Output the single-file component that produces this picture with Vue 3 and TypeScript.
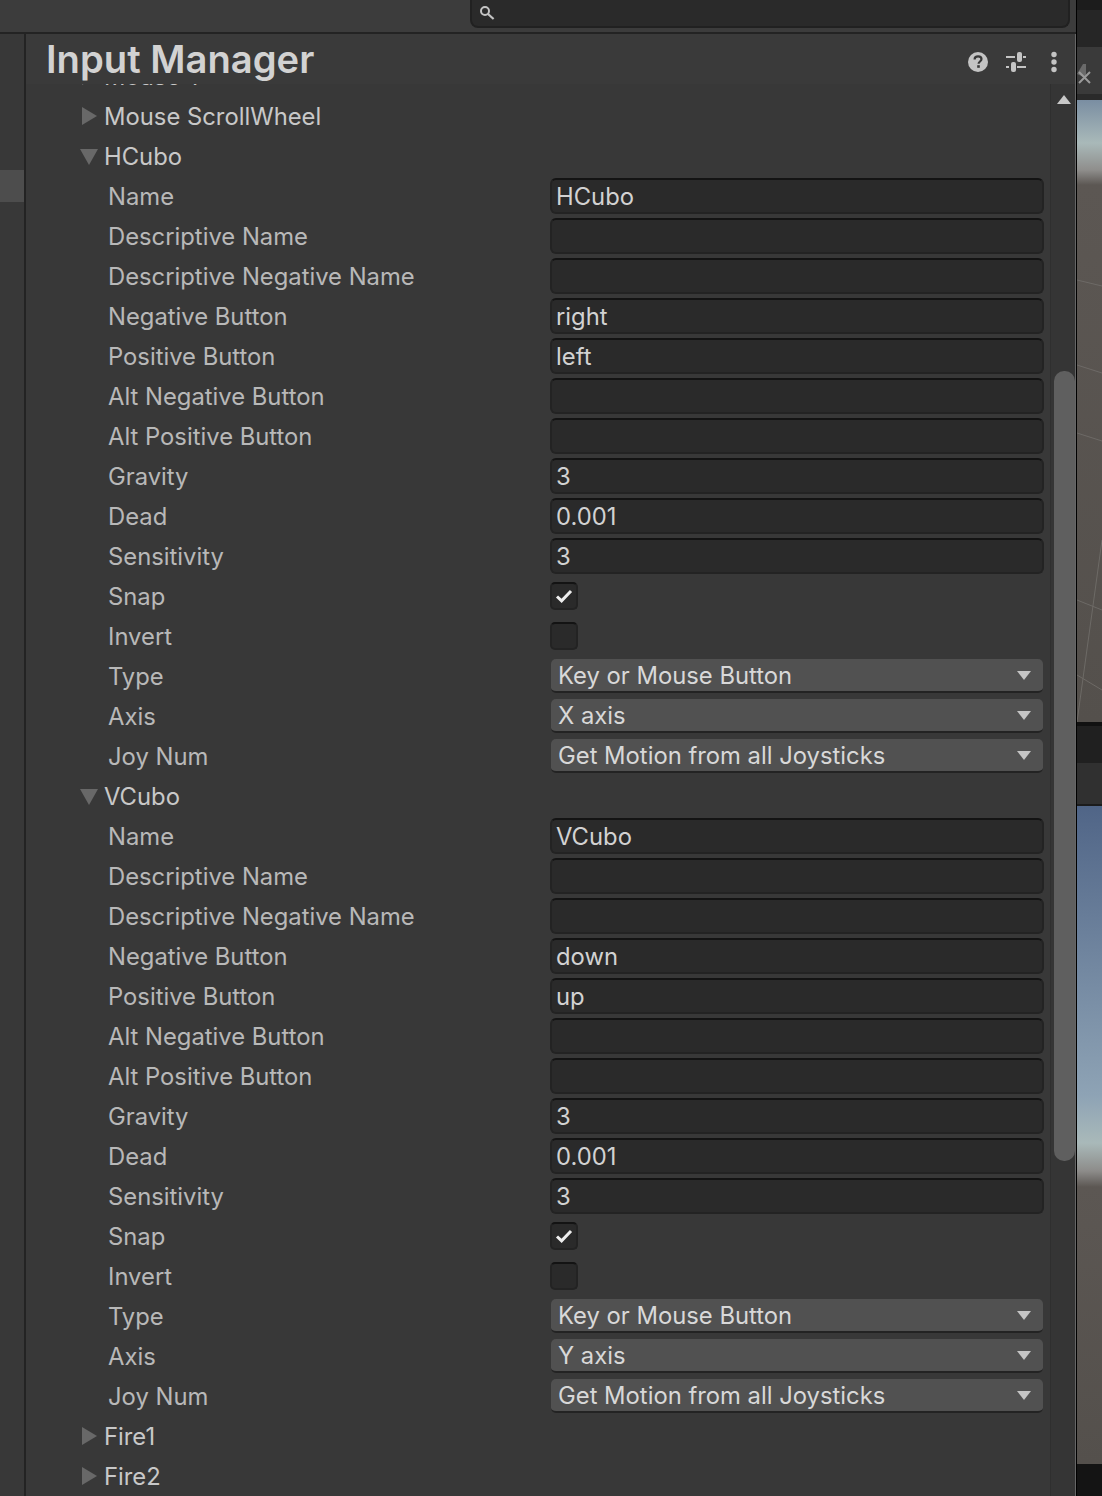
<script setup lang="ts">
type Row =
  | { kind: "field"; label: string; value: string }
  | { kind: "check"; label: string; checked: boolean }
  | { kind: "select"; label: string; value: string };

function axisRows(name: string, neg: string, pos: string, axis: string): Row[] {
  return [
    { kind: "field", label: "Name", value: name },
    { kind: "field", label: "Descriptive Name", value: "" },
    { kind: "field", label: "Descriptive Negative Name", value: "" },
    { kind: "field", label: "Negative Button", value: neg },
    { kind: "field", label: "Positive Button", value: pos },
    { kind: "field", label: "Alt Negative Button", value: "" },
    { kind: "field", label: "Alt Positive Button", value: "" },
    { kind: "field", label: "Gravity", value: "3" },
    { kind: "field", label: "Dead", value: "0.001" },
    { kind: "field", label: "Sensitivity", value: "3" },
    { kind: "check", label: "Snap", checked: true },
    { kind: "check", label: "Invert", checked: false },
    { kind: "select", label: "Type", value: "Key or Mouse Button" },
    { kind: "select", label: "Axis", value: axis },
    { kind: "select", label: "Joy Num", value: "Get Motion from all Joysticks" },
  ];
}

const axes: { name: string; open: boolean; rows: Row[] }[] = [
  { name: "Mouse Y", open: false, rows: [] },
  { name: "Mouse ScrollWheel", open: false, rows: [] },
  { name: "HCubo", open: true, rows: axisRows("HCubo", "right", "left", "X axis") },
  { name: "VCubo", open: true, rows: axisRows("VCubo", "down", "up", "Y axis") },
  { name: "Fire1", open: false, rows: [] },
  { name: "Fire2", open: false, rows: [] },
];
</script>

<template>
  <div class="window">
    <div class="left-col">
      <div class="topbar">
        <div class="search">
          <svg class="search-icon" width="16" height="16" viewBox="0 0 16 16">
            <circle cx="6" cy="6" r="4" fill="none" stroke="#c4c4c4" stroke-width="2" />
            <path d="M9 9l5.6 5" stroke="#c4c4c4" stroke-width="2.2" />
          </svg>
        </div>
      </div>
      <div class="body">
        <div class="side-strip">
          <div class="side-selected"></div>
        </div>
        <div class="inspector">
          <header class="title-bar">
            <h1>Input Manager</h1>
            <div class="title-icons">
              <svg width="22" height="22" viewBox="0 0 22 22">
                <circle cx="11" cy="11" r="10" fill="#c4c4c4" />
                <path d="M7.6 8.4c0-2 1.5-3.1 3.5-3.1s3.4 1.1 3.4 2.8c0 2.4-2.9 2.4-2.9 4.6" fill="none" stroke="#383838" stroke-width="2.2" />
                <rect x="10.2" y="14.2" width="2.6" height="2.6" fill="#383838" />
              </svg>
              <svg width="22" height="22" viewBox="0 0 22 22">
                <path d="M1 6h9M18 6h3M1 16h3M12 16h9" stroke="#c4c4c4" stroke-width="2" />
                <rect x="12" y="1" width="5" height="10" rx="2" fill="#c4c4c4" />
                <rect x="6" y="11" width="5" height="10" rx="2" fill="#c4c4c4" />
              </svg>
              <svg width="22" height="22" viewBox="0 0 22 22">
                <circle cx="11" cy="3.5" r="2.7" fill="#c4c4c4" />
                <circle cx="11" cy="11" r="2.7" fill="#c4c4c4" />
                <circle cx="11" cy="18.5" r="2.7" fill="#c4c4c4" />
              </svg>
            </div>
          </header>
          <div class="content">
            <div class="list">
              <template v-for="axis in axes" :key="axis.name">
                <div class="row head">
                  <span class="tri" :class="{ open: axis.open }"></span>
                  <span>{{ axis.name }}</span>
                </div>
                <div v-for="row in axis.rows" :key="row.label" class="row">
                  <span class="label">{{ row.label }}</span>
                  <div v-if="row.kind === 'field'" class="field">{{ row.value }}</div>
                  <div v-else-if="row.kind === 'check'" class="check">
                    <svg v-if="row.checked" width="20" height="18" viewBox="0 0 20 18">
                      <path d="M3 9.5l4.6 4.4L17 4" fill="none" stroke="#eeeeee" stroke-width="3" />
                    </svg>
                  </div>
                  <div v-else class="select">
                    <span>{{ row.value }}</span>
                    <span class="select-arrow"></span>
                  </div>
                </div>
              </template>
            </div>
            <div class="scrollbar">
              <span class="scroll-up"></span>
              <div class="thumb"></div>
            </div>
          </div>
        </div>
      </div>
    </div>
    <div class="scene-col">
      <div class="scene-top"></div>
      <div class="scene-bar"></div>
      <div class="scene-tool">
        <svg width="25" height="24" viewBox="0 0 25 24">
          <path d="M0 12l6-10h3v14z" fill="#6a6a6a" />
          <path d="M3 12l11 11M14 12L3 23" transform="translate(-1 -2)" stroke="#9a9a9a" stroke-width="2" />
        </svg>
      </div>
      <div class="scene-gap"></div>
      <div class="scene-view first">
        <svg class="grid" width="25" height="622" viewBox="0 0 25 622">
          <path d="M0 180l25 6M0 265l25 8M0 333l25 8M0 500l25 10M0 575l25 15M0 622l25-182" fill="none" stroke="#6d6a66" stroke-width="1" />
        </svg>
      </div>
      <div class="scene-sep"></div>
      <div class="scene-bar low"></div>
      <div class="scene-bar mid"></div>
      <div class="scene-view second"></div>
      <div class="scene-bottom"></div>
    </div>
  </div>
</template>

<style scoped>
.window {
  display: flex;
  width: 1102px;
  height: 1496px;
  overflow: hidden;
  background: #383838;
  color: #c4c4c4;
  font-family: Inter, "Liberation Sans", sans-serif;
  font-size: 23.8px;
}

.left-col {
  display: flex;
  flex-direction: column;
  width: 1077px;
  border-right: 1px solid #000;
  box-sizing: border-box;
}

.topbar {
  flex: none;
  height: 34px;
  padding-left: 470px;
  padding-right: 6px;
  box-sizing: border-box;
  background: #3c3c3c;
  border-bottom: 2px solid #232323;
}

.search {
  display: flex;
  align-items: center;
  height: 28px;
  padding-left: 7px;
  box-sizing: border-box;
  background: #2a2a2a;
  border: solid #212121;
  border-width: 0 2px 2px;
  border-radius: 0 0 8px 8px;
}

.body {
  flex: 1;
  display: flex;
  min-height: 0;
}

.side-strip {
  flex: none;
  width: 26px;
  box-sizing: border-box;
  background: #383838;
  border-right: 2px solid #232323;
  padding-top: 136px;
}

.side-selected {
  height: 32px;
  background: #4d4d4d;
}

.inspector {
  flex: 1;
  display: flex;
  flex-direction: column;
  min-width: 0;
  border-right: 1px solid #666;
}

.title-bar {
  flex: none;
  display: flex;
  align-items: center;
  justify-content: space-between;
  height: 50px;
  padding: 0 10px 0 20px;
  background: #3a3a3a;
}

h1 {
  margin: 0;
  font-size: 38.2px;
  font-weight: 600;
  color: #d2d2d2;
  line-height: 50px;
}

.title-icons {
  display: flex;
  align-items: center;
  gap: 16px;
  margin-top: 6px;
}

.content {
  flex: 1;
  display: flex;
  min-height: 0;
}

.list {
  flex: 1;
  min-width: 0;
  overflow: hidden;
  padding: 0 6px 0 0;
}

.row {
  display: flex;
  align-items: center;
  height: 40px;
  padding-left: 82px;
  white-space: nowrap;
}

.head:first-child {
  margin-top: -28px;
}

.head {
  padding-left: 56px;
  color: #c8c8c8;
}

.tri {
  flex: none;
  width: 0;
  height: 0;
  margin-right: 7px;
  border-style: solid;
  border-color: transparent;
  border-width: 9px 0 9px 15px;
  border-left-color: #686868;
}

.tri.open {
  margin-left: -2px;
  margin-right: 6px;
  margin-top: 1px;
  border-width: 16px 9px 0;
  border-top-color: #686868;
  border-left-color: transparent;
}

.label {
  flex: none;
  width: 442px;
  color: #b8b8b8;
}

.field {
  flex: 1;
  height: 36px;
  padding-left: 4px;
  box-sizing: border-box;
  background: #2a2a2a;
  border: 2px solid #232323;
  border-top-color: #131313;
  border-radius: 6px;
  color: #d2d2d2;
  display: flex;
  align-items: center;
}

.check {
  display: flex;
  align-items: center;
  justify-content: center;
  width: 28px;
  height: 28px;
  box-sizing: border-box;
  background: #2a2a2a;
  border: 2px solid #232323;
  border-top-color: #131313;
  border-radius: 5px;
}

.select {
  flex: 1;
  display: flex;
  align-items: center;
  justify-content: space-between;
  height: 34px;
  margin: 0 1px;
  padding: 0 12px 0 7px;
  box-sizing: border-box;
  background: #515151;
  border-bottom: 2px solid #232323;
  border-radius: 5px;
  color: #d8d8d8;
}

.select-arrow {
  width: 0;
  height: 0;
  border-style: solid;
  border-color: #c4c4c4 transparent transparent;
  border-width: 9px 7px 0;
}

.scrollbar {
  position: relative;
  flex: none;
  width: 25px;
  background: #353535;
  border-left: 1px solid #2f2f2f;
  box-sizing: border-box;
}

.scroll-up {
  position: absolute;
  top: 11px;
  left: 6px;
  width: 0;
  height: 0;
  border-style: solid;
  border-color: transparent transparent #c8c8c8;
  border-width: 0 7px 9px;
}

.thumb {
  position: absolute;
  top: 287px;
  left: 3px;
  width: 21px;
  height: 790px;
  background: #5f5f5f;
  border-radius: 10px;
}

.scene-col {
  flex: 1;
  display: flex;
  flex-direction: column;
}

.scene-top {
  height: 10px;
  background: #1c1c1c;
}

.scene-bar {
  height: 37px;
  background: #262626;
}

.scene-tool {
  height: 47px;
  padding-top: 15px;
  box-sizing: border-box;
  background: #3a3a3a;
}

.scene-gap {
  height: 6px;
  background: #2a2a2a;
}

.scene-view {
  position: relative;
  overflow: hidden;
}

.scene-view.first {
  height: 622px;
  background: linear-gradient(#7a8ea2 0, #a9b9b9 43px, #8f8e8c 70px, #5c5753 85px, #54504c 622px);
}

.grid {
  position: absolute;
  inset: 0;
}

.scene-sep {
  height: 4px;
  background: #111;
}

.scene-bar.low {
  height: 37px;
  background: #202020;
}

.scene-bar.mid {
  height: 41px;
  background: #303030;
  border-bottom: 2px solid #1c1c1c;
  box-sizing: content-box;
}

.scene-view.second {
  flex: 1;
  background: linear-gradient(#506587 0, #8ea3b5 290px, #a9b9b9 337px, #8d8c8a 365px, #5c5753 381px, #54504c 658px);
}

.scene-bottom {
  height: 32px;
  background: #141414;
}
</style>
